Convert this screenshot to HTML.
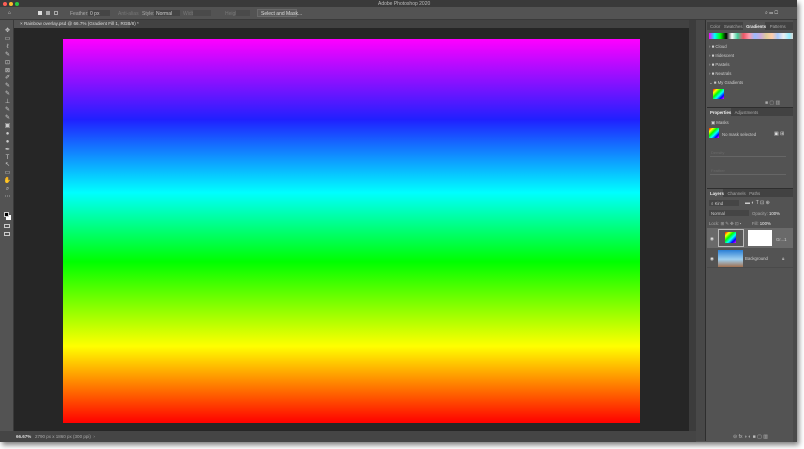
<!DOCTYPE html>
<html><head><style>
*{margin:0;padding:0;box-sizing:border-box}
body{width:804px;height:449px;background:#fff;position:relative;overflow:hidden;font-family:"Liberation Sans",sans-serif;font-size:5px;color:#ccc}
.a{position:absolute}
.win{left:0;top:0;width:797px;height:442px;background:#535353;box-shadow:2px 3px 5px rgba(0,0,0,.5)}
.t{white-space:nowrap}
</style></head><body>
<div class="a win">
 <!-- title bar -->
 <div class="a" style="left:0;top:0;width:797px;height:7px;background:#3a3a3a"></div>
 <div class="a" style="left:3px;top:2px;width:4px;height:4px;border-radius:50%;background:#fe5f57"></div>
 <div class="a" style="left:9px;top:2px;width:4px;height:4px;border-radius:50%;background:#febc2e"></div>
 <div class="a" style="left:15px;top:2px;width:4px;height:4px;border-radius:50%;background:#28c840"></div>
 <div class="a t" style="left:378px;top:1px;font-size:5px;color:#bbb">Adobe Photoshop 2020</div>
 <!-- options bar -->
 <div class="a" style="left:0;top:7px;width:797px;height:13px;background:#535353;border-bottom:1px solid #3a3a3a"></div>
 <div class="a t" style="left:8px;top:10px;color:#ddd">⌂</div>
 <div class="a" style="left:38px;top:11px;width:4px;height:4px;background:#ddd"></div>
 <div class="a" style="left:46px;top:11px;width:4px;height:4px;background:#aaa"></div>
 <div class="a" style="left:54px;top:11px;width:4px;height:4px;border:1px solid #aaa"></div>
 <div class="a t" style="left:70px;top:11px;color:#aaa">Feather:</div>
 <div class="a" style="left:88px;top:10px;width:22px;height:6px;background:#454545"></div>
 <div class="a t" style="left:90px;top:11px;color:#ccc">0 px</div>
 <div class="a t" style="left:118px;top:11px;color:#777">Anti-alias</div>
 <div class="a t" style="left:142px;top:11px;color:#aaa">Style:</div>
 <div class="a" style="left:154px;top:10px;width:26px;height:6px;background:#454545"></div>
 <div class="a t" style="left:156px;top:11px;color:#ccc">Normal</div>
 <div class="a t" style="left:183px;top:11px;color:#777">Width:</div>
 <div class="a" style="left:193px;top:10px;width:18px;height:6px;background:#4a4a4a"></div>
 <div class="a t" style="left:225px;top:11px;color:#777">Height:</div>
 <div class="a" style="left:236px;top:10px;width:14px;height:6px;background:#4a4a4a"></div>
 <div class="a" style="left:257px;top:9px;width:40px;height:8px;border:1px solid #6a6a6a;background:#5a5a5a"></div>
 <div class="a t" style="left:261px;top:11px;color:#ddd">Select and Mask...</div>
 <div class="a t" style="left:765px;top:10px;color:#ccc">⌕ ▭ ▢</div>
 <!-- tab bar -->
 <div class="a" style="left:14px;top:20px;width:675px;height:8px;background:#424242"></div>
 <div class="a" style="left:14px;top:20px;width:116px;height:8px;background:#535353"></div>
 <div class="a t" style="left:20px;top:21px;color:#ddd;font-size:4.6px">× Rainbow overlay.psd @ 66.7% (Gradient Fill 1, RGB/8) *</div>
 <!-- toolbar -->
 <div class="a" style="left:0;top:20px;width:14px;height:411px;background:#535353;border-right:1px solid #3a3a3a"></div>
 <div class="a" style="left:3px;top:28px;width:9px;height:215px;color:#ccc;font-size:6px;line-height:7.9px;text-align:center">✥<br>▭<br>ℓ<br>✎<br>⊡<br>⊠<br>✐<br>✎<br>✎<br>⊥<br>✎<br>✎<br>▣<br>●<br>●<br>✒<br>T<br>↖<br>▭<br>✋<br>⌕<br>⋯</div>
 <div class="a" style="left:6px;top:215px;width:5px;height:5px;background:#fff"></div>
 <div class="a" style="left:4px;top:212px;width:5px;height:5px;background:#000;border:1px solid #ccc"></div>
 <div class="a" style="left:4px;top:224px;width:6px;height:4px;border:1px solid #ccc"></div>
 <div class="a" style="left:4px;top:232px;width:6px;height:4px;border:1px solid #ccc"></div>
 <!-- document area -->
 <div class="a" style="left:14px;top:28px;width:675px;height:403px;background:#262626"></div>
 <div class="a" style="left:63px;top:39px;width:577px;height:384px;background:linear-gradient(#ff00ff 0%,#2020ff 21%,#00ffff 40%,#00ff00 58%,#ffff00 80%,#ff0000 100%)"></div>
 <div class="a" style="left:689px;top:20px;width:7px;height:411px;background:#3c3c3c"></div>
 <div class="a" style="left:696px;top:20px;width:10px;height:421px;background:#484848;border-right:1px solid #2e2e2e"></div>
 <!-- status -->
 <div class="a" style="left:0;top:431px;width:696px;height:11px;background:#454545"></div>
 <div class="a t" style="left:16px;top:434px;color:#ddd;font-size:4.5px"><b>66.67%</b> &nbsp;&nbsp;<span style="color:#aaa">2790 px x 1860 px (300 ppi) &nbsp;›</span></div>
 <!-- right panels -->
 <div class="a" style="left:707px;top:20px;width:90px;height:422px;background:#535353"></div>
 <div class="a" style="left:707px;top:22px;width:90px;height:8px;background:#424242"></div>
 <div class="a" style="left:743px;top:22px;width:22px;height:8px;background:#535353"></div>
 <div class="a t" style="left:710px;top:24px;color:#aaa;font-size:4.3px">Color &nbsp; Swatches &nbsp; <b style="color:#eee">Gradients</b> &nbsp; Patterns</div>
 <div class="a" style="left:709px;top:33px;width:86px;height:6px;background:linear-gradient(90deg,#f0f,#0ff,#0f0,#000,#fff,#4c9,#e56,#f9a,#9bf,#cad,#dc9,#fca,#acf,#eee,#9ef,#fcb)"></div>
 <div class="a" style="left:709px;top:42px;width:84px;height:48px;color:#ccc;font-size:4.3px;line-height:9.1px">› ■ Cloud<br>› ■ Iridescent<br>› ■ Pastels<br>› ■ Neutrals<br>⌄ ■ My Gradients</div>
 <div class="a" style="left:713px;top:89px;width:11px;height:10px;background:linear-gradient(135deg,#f00,#ff0,#0f0,#0ff,#00f,#f0f)"></div>
 <div class="a t" style="left:765px;top:100px;color:#aaa;font-size:5px">■ ▢ ▥</div>
 <div class="a" style="left:707px;top:107px;width:90px;height:1px;background:#2e2e2e"></div>
 <div class="a" style="left:707px;top:108px;width:90px;height:8px;background:#424242"></div>
 <div class="a" style="left:707px;top:108px;width:24px;height:8px;background:#535353"></div>
 <div class="a t" style="left:710px;top:110px;color:#eee;font-size:4.3px"><b>Properties</b> &nbsp; <span style="color:#aaa">Adjustments</span></div>
 <div class="a t" style="left:711px;top:120px;color:#ccc;font-size:4.3px">▣ Masks</div>
 <div class="a" style="left:709px;top:128px;width:10px;height:10px;background:linear-gradient(135deg,#f00,#ff0,#0f0,#0ff,#00f,#f0f)"></div>
 <div class="a t" style="left:722px;top:132px;color:#ccc;font-size:4.3px">No mask selected</div>
 <div class="a t" style="left:774px;top:131px;color:#ddd;font-size:5px">▣ ⊞</div>
 <div class="a" style="left:710px;top:156px;width:76px;height:1px;background:#666"></div>
 <div class="a" style="left:710px;top:174px;width:76px;height:1px;background:#666"></div>
 <div class="a t" style="left:711px;top:150px;color:#6a6a6a;font-size:4px">Density</div>
 <div class="a t" style="left:711px;top:168px;color:#6a6a6a;font-size:4px">Feather</div>
 <div class="a" style="left:707px;top:188px;width:90px;height:1px;background:#2e2e2e"></div>
 <div class="a" style="left:707px;top:189px;width:90px;height:8px;background:#424242"></div>
 <div class="a" style="left:707px;top:189px;width:16px;height:8px;background:#535353"></div>
 <div class="a t" style="left:710px;top:191px;color:#eee;font-size:4.3px"><b>Layers</b> &nbsp; <span style="color:#aaa">Channels &nbsp; Paths</span></div>
 <div class="a" style="left:709px;top:200px;width:30px;height:6px;background:#454545"></div>
 <div class="a t" style="left:711px;top:201px;color:#ccc;font-size:4.3px">⌕ Kind</div>
 <div class="a t" style="left:745px;top:200px;color:#ccc;font-size:5px">▬ ◐ T ⊡ ⊕</div>
 <div class="a" style="left:709px;top:210px;width:40px;height:6px;background:#454545"></div>
 <div class="a t" style="left:711px;top:211px;color:#ccc;font-size:4.3px">Normal</div>
 <div class="a t" style="left:752px;top:211px;color:#aaa;font-size:4.3px">Opacity: <span style="color:#eee">100%</span></div>
 <div class="a t" style="left:709px;top:221px;color:#aaa;font-size:4.3px">Lock: ⊞ ✎ ✥ ⊡ ▪ &nbsp;&nbsp;&nbsp;&nbsp;&nbsp;&nbsp;&nbsp; Fill: <span style="color:#eee">100%</span></div>
 <div class="a" style="left:707px;top:228px;width:86px;height:20px;background:#6a6a6a"></div>
 <div class="a t" style="left:710px;top:236px;color:#ddd;font-size:4.5px">◉</div>
 <div class="a" style="left:718px;top:229px;width:26px;height:18px;background:#595959;border:1px solid #bbb"></div>
 <div class="a" style="left:725px;top:232px;width:11px;height:11px;background:linear-gradient(135deg,#f00,#ff0,#0f0,#0ff,#00f,#f0f)"></div>
 <div class="a" style="left:748px;top:230px;width:24px;height:16px;background:#fff"></div>
 <div class="a t" style="left:776px;top:237px;color:#ccc;font-size:4.3px">Gr...1</div>
 <div class="a t" style="left:710px;top:256px;color:#ddd;font-size:4.5px">◉</div>
 <div class="a" style="left:718px;top:250px;width:25px;height:17px;background:linear-gradient(#2a7fd6,#9fd0f0 55%,#a07050)"></div>
 <div class="a t" style="left:745px;top:256px;color:#ccc;font-size:4.3px">Background</div>
 <div class="a t" style="left:782px;top:256px;color:#aaa;font-size:4.5px">🔒︎</div>
 <div class="a" style="left:707px;top:267px;width:86px;height:1px;background:#4a4a4a"></div>
 <div class="a t" style="left:733px;top:434px;color:#bbb;font-size:5px">⊝ fx ◑ ◐ ■ ▢ ▥</div>
 <div class="a" style="left:793px;top:20px;width:4px;height:422px;background:#4a4a4a"></div>
</div>
</body></html>
